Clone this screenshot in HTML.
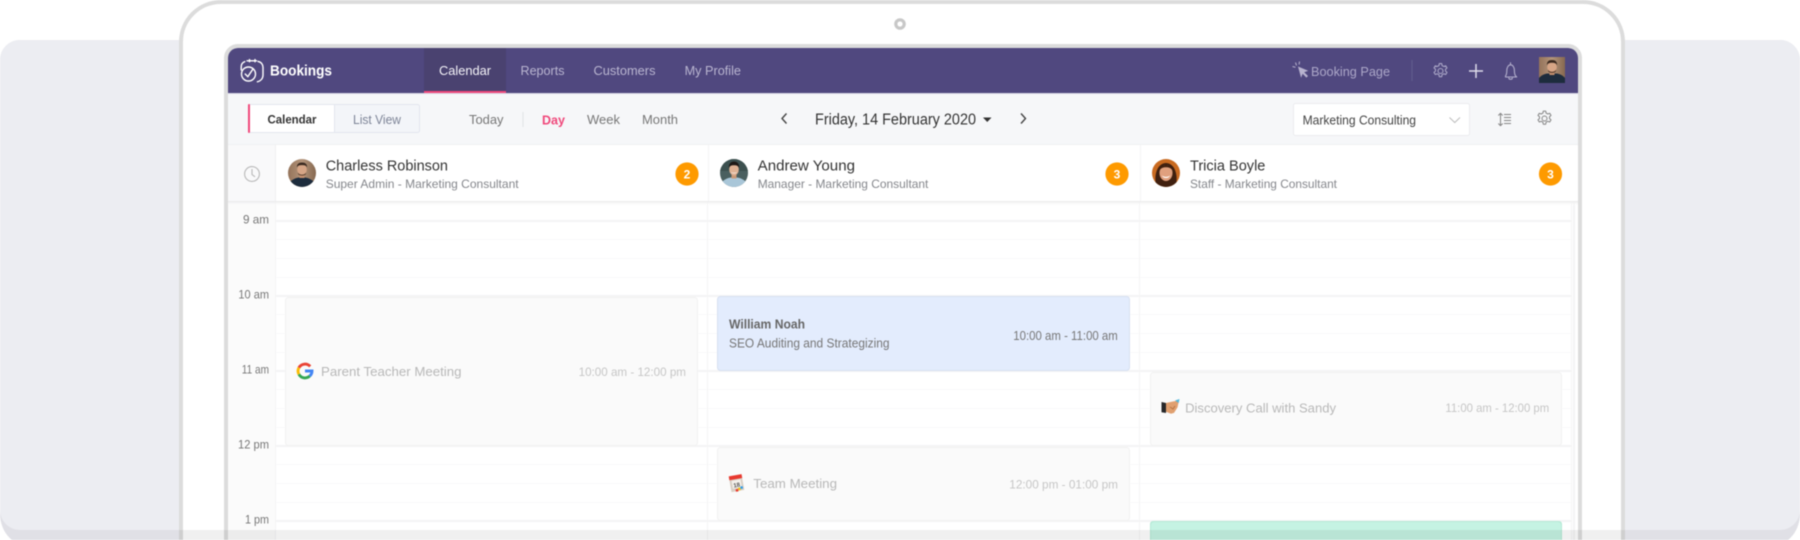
<!DOCTYPE html>
<html lang="en">
<head>
<meta charset="utf-8">
<title>Bookings</title>
<style>
html,body{margin:0;padding:0;background:#fff;width:1800px;height:540px;overflow:hidden}
svg{display:block;filter:blur(.4px)}
text{font-family:"Liberation Sans",Arial,sans-serif}
.n{font-size:13px;fill:#b9b5d0}
.tb{font-size:13px;fill:#777}
.nm{font-size:15px;fill:#333}
.sb{font-size:12px;fill:#85878c}
.tm{font-size:12px;fill:#777}
.ev{font-size:13px;fill:#b8b8b8}
.et{font-size:12px;fill:#c6c6c6}
.bd{font-size:12px;font-weight:bold;fill:#fff}
</style>
</head>
<body>
<svg xmlns="http://www.w3.org/2000/svg" width="1800" height="540" viewBox="0 0 1800 540">
<defs>
<clipPath id="c1"><circle cx="302" cy="173" r="14"/></clipPath>
<clipPath id="c2"><circle cx="734" cy="173" r="14"/></clipPath>
<clipPath id="c3"><circle cx="1166" cy="173" r="14"/></clipPath>
<clipPath id="navclip"><path d="M228 540V58a10 10 0 0 1 10-10H1568a10 10 0 0 1 10 10V540z"/></clipPath>
<linearGradient id="sh" x1="0" y1="0" x2="0" y2="1"><stop offset="0" stop-color="#e9e9ea"/><stop offset="1" stop-color="#fff" stop-opacity="0"/></linearGradient>
<linearGradient id="wood" x1="0" y1="0" x2="1" y2="0"><stop offset="0" stop-color="#94735a"/><stop offset=".5" stop-color="#b3947a"/><stop offset="1" stop-color="#866850"/></linearGradient>
</defs>

<!-- background panels -->
<path d="M0 540V60a20 20 0 0 1 20-20H1780a20 20 0 0 1 20 20V517Q1798 532 1788 540H12Q2 532 0 517z" fill="#e0e0e6" transform="translate(0 0)"/>
<rect x="0" y="40" width="1800" height="490" rx="20" fill="#ecedf2"/>

<!-- laptop -->
<path d="M181 540V42a40 40 0 0 1 40-40H1583a40 40 0 0 1 40 40V540" fill="#fff" stroke="#dcdcdc" stroke-width="4"/>
<circle cx="900" cy="24" r="4.200" fill="#fff" stroke="#c8c8c8" stroke-width="3.200"/>
<path d="M226 540V58a12 12 0 0 1 12-12H1568a12 12 0 0 1 12 12V540" fill="#fff" stroke="#dcdcdc" stroke-width="4"/>

<g clip-path="url(#navclip)">
<!-- nav -->
<rect x="228" y="48" width="1350" height="45" fill="#50487f"/>
<rect x="424" y="48" width="82" height="45" fill="#4a4270"/>
<rect x="424" y="91" width="82" height="2" fill="#f0487b"/>
<rect x="228" y="93" width="1350" height="1" fill="#d9d8e6"/>
<!-- toolbar -->
<rect x="228" y="94" width="1350" height="51" fill="#f6f7f9"/>
<rect x="228" y="144" width="1350" height="1" fill="#f0f1f3"/>

<!-- grid -->
<rect x="228" y="145" width="48" height="395" fill="#fbfbfb"/>
<rect x="276" y="145" width="1302" height="395" fill="#fff"/>
<g fill="#f9f9fa">
<rect x="276" y="239" width="1295" height="1"/><rect x="276" y="258" width="1295" height="1"/><rect x="276" y="277" width="1295" height="1"/>
<rect x="276" y="314" width="1295" height="1"/><rect x="276" y="333" width="1295" height="1"/><rect x="276" y="352" width="1295" height="1"/>
<rect x="276" y="389" width="1295" height="1"/><rect x="276" y="408" width="1295" height="1"/><rect x="276" y="427" width="1295" height="1"/>
<rect x="276" y="464" width="1295" height="1"/><rect x="276" y="483" width="1295" height="1"/><rect x="276" y="502" width="1295" height="1"/>
</g>
<g fill="#f4f4f5">
<rect x="276" y="220" width="1295" height="2"/><rect x="276" y="295" width="1295" height="2"/><rect x="276" y="370" width="1295" height="2"/><rect x="276" y="445" width="1295" height="2"/><rect x="276" y="520" width="1295" height="2"/>
<rect x="275" y="201" width="1" height="339"/><rect x="707" y="201" width="1" height="339"/><rect x="1139" y="201" width="1" height="339"/><rect x="1571" y="201" width="1" height="339"/><rect x="1573" y="201" width="2" height="339"/>
</g>
<!-- header -->
<rect x="228" y="145" width="48" height="56" fill="#f9f9fa"/>
<rect x="276" y="145" width="1302" height="56" fill="#fff"/>
<rect x="275" y="145" width="1" height="56" fill="#f0f0f1"/>
<rect x="708" y="145" width="1" height="56" fill="#f4f4f5"/>
<rect x="1140" y="145" width="1" height="56" fill="#f4f4f5"/>
<rect x="228" y="201" width="1350" height="5" fill="url(#sh)"/>

<!-- events -->
<rect x="285.500" y="297.500" width="412" height="148" rx="3" fill="#fafafa" stroke="#f2f2f2"/>
<rect x="717.500" y="296.500" width="412" height="74" rx="3" fill="#e3ecfd" stroke="#d7e0f1"/>
<rect x="717.500" y="447.500" width="412" height="73" rx="3" fill="#fafafa" stroke="#f2f2f2"/>
<rect x="1150.500" y="372.500" width="411" height="73" rx="3" fill="#fafafa" stroke="#f2f2f2"/>
<path d="M1150 540V524a3 3 0 0 1 3-3H1559a3 3 0 0 1 3 3V540z" fill="#b6e9d6"/>
<path d="M1151 540V525a3 3 0 0 1 3-3H1558a3 3 0 0 1 3 3V540z" fill="#c5f3e3"/>
</g>

<!-- logo -->
<g transform="translate(240 59)" fill="none" stroke="#fff" stroke-width="1.400" stroke-linecap="round" stroke-linejoin="round">
<circle cx="8.500" cy="15" r="7"/>
<path d="M5.200 15l2.600 2.700L13 10"/>
<path d="M7 1.800H16.500M9.500 .6v2.200M15 .6v2.200"/>
<path d="M18 2.400c3 .4 5 3 5 6v7.600c0 3.600-2.400 6-5.600 6.800"/>
<path d="M1.200 11V8c0-2.600 1.400-4.600 3.600-5.400"/>
</g>

<text x="270" y="75.500" font-size="15" font-weight="bold" fill="#fff" textLength="62" lengthAdjust="spacingAndGlyphs">Bookings</text>
<text x="439" y="75" class="n" style="fill:#f4f3f8" textLength="52" lengthAdjust="spacingAndGlyphs">Calendar</text>
<text x="520.500" y="75" class="n" textLength="44" lengthAdjust="spacingAndGlyphs">Reports</text>
<text x="593.500" y="75" class="n" textLength="62" lengthAdjust="spacingAndGlyphs">Customers</text>
<text x="684.600" y="75" class="n" textLength="56.400" lengthAdjust="spacingAndGlyphs">My Profile</text>

<!-- right nav -->
<g fill="#b8b3cf">
<path d="M1298 66.500l10.200 4.200-4 1.500 3.800 3.800-1.600 1.600-3.800-3.800-1.500 4z"/>
<path d="M1295.500 62.500l1 3M1292.500 66.500l3 .8M1299.500 61.500l-.4 3" stroke="#b8b3cf" stroke-width="1" fill="none"/>
</g>
<text x="1311" y="76" class="n" style="fill:#aca7c8" textLength="79" lengthAdjust="spacingAndGlyphs">Booking Page</text>
<rect x="1411.500" y="60" width="1" height="21" fill="#635c8e"/>
<g fill="none" stroke="#a9a5c6" stroke-width="1.100" stroke-linejoin="round">
<path transform="translate(1432.500 63)" d="M6.800 .6h2.400l.4 2 1.700.9 1.900-.7 1.300 2.100-1.500 1.400v1.700l1.500 1.400-1.300 2.100-1.900-.7-1.700.9-.4 2H6.800l-.4-2-1.700-.9-1.900.7-1.300-2.100 1.500-1.400V6.300L1.500 4.900l1.300-2.100 1.900.7 1.700-.9z"/>
<circle cx="1440.500" cy="71" r="2.500"/>
</g>
<path d="M1476 64v14M1469 71h14" stroke="#dedcea" stroke-width="1.500" fill="none"/>
<g fill="none" stroke="#b3afcd" stroke-width="1.100" stroke-linejoin="round" stroke-linecap="round">
<path d="M1510.500 62.800v1.200M1505.500 76c1.200-1.400 1.300-3 1.300-5.400 0-3.200 1.600-5.800 3.800-5.800s3.800 2.600 3.800 5.800c0 2.400.1 4 1.300 5.400l1 1h-11.200z"/>
<path d="M1508.800 78.200c.4 1.400 3.200 1.400 3.600 0"/>
</g>
<!-- nav avatar -->
<g>
<rect x="1539" y="57" width="26" height="26" fill="url(#wood)"/>
<path d="M1539 83v-5c2-2.500 5-4 8-4.500h10c3 .5 6 2 8 4.500v5z" fill="#1d2c3d"/>
<rect x="1549.500" y="71" width="5" height="4" fill="#c4906f"/>
<ellipse cx="1552" cy="67" rx="4.800" ry="5.800" fill="#d6a586"/>
<path d="M1547 65.500c-.5-4 2-5.500 5-5.500s5.500 1.500 5 5.500c-.6-2-2-2.700-5-2.700s-4.400.7-5 2.700z" fill="#3a2a20"/>
<path d="M1548 69.500c1 3 7 3 8 0l-.2 2c-1.500 2-6 2-7.600 0z" fill="#5a4030"/>
</g>

<!-- toolbar content -->
<rect x="248.500" y="104.500" width="171" height="28" rx="2" fill="#f3f5f9" stroke="#e3e6ee"/>
<rect x="249" y="105" width="85" height="27" fill="#fff"/>
<rect x="334" y="105" width="1" height="27" fill="#e3e6ee"/>
<rect x="248" y="104" width="2" height="29" rx="1" fill="#f0487b"/>
<text x="267.500" y="123.500" font-size="12" font-weight="bold" fill="#333" textLength="49" lengthAdjust="spacingAndGlyphs">Calendar</text>
<text x="353" y="124" font-size="12.500" fill="#7d8497" textLength="48" lengthAdjust="spacingAndGlyphs">List View</text>
<text x="469" y="124" class="tb" textLength="34.500" lengthAdjust="spacingAndGlyphs">Today</text>
<rect x="522.500" y="112" width="1" height="15" fill="#e2e3e6"/>
<text x="542" y="124.500" font-size="13" font-weight="bold" fill="#f0487b" textLength="23" lengthAdjust="spacingAndGlyphs">Day</text>
<text x="587" y="124" class="tb" textLength="33" lengthAdjust="spacingAndGlyphs">Week</text>
<text x="642" y="124" class="tb" textLength="36" lengthAdjust="spacingAndGlyphs">Month</text>
<path d="M786.500 113.500L782 118.500l4.500 5M1021 113.500l4.500 5-4.500 5" fill="none" stroke="#444" stroke-width="1.400"/>
<text x="815" y="124.500" font-size="15.500" fill="#333" textLength="161" lengthAdjust="spacingAndGlyphs">Friday, 14 February 2020</text>
<path d="M983 117.500h8.500l-4.250 4.500z" fill="#333"/>

<rect x="1293.500" y="103.500" width="176" height="32" rx="2" fill="#fff" stroke="#ebecef"/>
<text x="1302.600" y="124.500" font-size="12.500" fill="#444" textLength="113.400" lengthAdjust="spacingAndGlyphs">Marketing Consulting</text>
<path d="M1449.500 117.500l5.250 5 5.250-5" fill="none" stroke="#bdbdbd" stroke-width="1"/>
<g fill="none" stroke="#858585" stroke-width="1">
<path d="M1500.500 113.500v12M1498.300 115.500l2.200-2.200 2.200 2.200M1498.300 123.500l2.200 2.200 2.200-2.200"/>
<path d="M1504 114.500h7M1504 117.500h7M1504 120.500h7M1504 123.500h7"/>
<path transform="translate(1536.500 110.500)" d="M6.800 .6h2.400l.4 2 1.700.9 1.900-.7 1.300 2.100-1.500 1.400v1.700l1.500 1.400-1.300 2.100-1.900-.7-1.700.9-.4 2H6.800l-.4-2-1.700-.9-1.900.7-1.300-2.100 1.500-1.400V6.300L1.500 4.900l1.300-2.100 1.900.7 1.700-.9z" stroke-linejoin="round"/>
<circle cx="1544.500" cy="118.500" r="2.500"/>
</g>

<!-- header content -->
<g fill="none" stroke="#b8b8b8" stroke-width="1.100">
<circle cx="252" cy="174" r="7.400"/><path d="M252 169v5.500l3 2.300"/>
</g>

<g clip-path="url(#c1)">
<rect x="288" y="159" width="28" height="28" fill="url(#wood)"/>
<path d="M288 187v-3c3-4 7-6 11-6.500h6c4 .5 8 2.500 11 6.500v3z" fill="#1d2c3d"/>
<rect x="299.500" y="173" width="5" height="5" fill="#c4906f"/>
<ellipse cx="302" cy="169.500" rx="4.800" ry="5.800" fill="#d6a586"/>
<path d="M297 167.500c-.5-3.500 2-5 5-5s5.500 1.500 5 5c-.6-1.800-2-2.400-5-2.400s-4.400.6-5 2.400z" fill="#3a2a20"/>
<path d="M298 172.500c1 2.800 7 2.800 8 0l-.2 1.800c-1.500 1.800-6 1.800-7.600 0z" fill="#5a4030"/>
</g>
<g clip-path="url(#c2)">
<rect x="720" y="159" width="28" height="28" fill="#4a5f5f"/>
<path d="M720 159h28v12h-28z" fill="#3c504f"/>
<path d="M720 187v-3c3-4 7-6 11-6.500h6c4 .5 8 2.500 11 6.500v3z" fill="#a9c6d8"/>
<rect x="731.500" y="173" width="5" height="5.500" fill="#c99877"/>
<ellipse cx="734" cy="169.500" rx="4.800" ry="5.900" fill="#dfb294"/>
<path d="M729 168c-.6-4.500 2.200-6.500 5-6.500s5.800 2 5 6.500c-.6-2-2-2.800-5-2.800s-4.400.8-5 2.800z" fill="#1f1a17"/>
<path d="M731 172c1.500 1 4.500 1 6 0-.5 1.800-5.500 1.800-6 0z" fill="#fff"/>
</g>
<g clip-path="url(#c3)">
<rect x="1152" y="159" width="28" height="28" fill="#c96a20"/>
<path d="M1156 187c-1-7-1-12 1-17s6-7 9-7 7 2 9 7 2 10 1 17z" fill="#40200f"/>
<ellipse cx="1166" cy="173" rx="6.500" ry="8" fill="#e0a07e"/>
<path d="M1159.500 170c1-4 4.500-5 6.500-5s5.500 1 6.500 5c-2-2-3.500-2.800-6.500-2.800s-4.500.8-6.500 2.800z" fill="#40200f"/>
<path d="M1162 175.500c2.200 1.800 5.800 1.800 8 0-1 3.400-7 3.400-8 0z" fill="#fff"/>
</g>

<text x="325.700" y="170.500" class="nm" textLength="122.300" lengthAdjust="spacingAndGlyphs">Charless Robinson</text>
<text x="325.700" y="188" class="sb" textLength="192.900" lengthAdjust="spacingAndGlyphs">Super Admin - Marketing Consultant</text>
<text x="757.700" y="170.500" class="nm" textLength="97.300" lengthAdjust="spacingAndGlyphs">Andrew Young</text>
<text x="757.700" y="188" class="sb" textLength="170.700" lengthAdjust="spacingAndGlyphs">Manager - Marketing Consultant</text>
<text x="1190" y="170.500" class="nm" textLength="75.400" lengthAdjust="spacingAndGlyphs">Tricia Boyle</text>
<text x="1190" y="188" class="sb" textLength="147" lengthAdjust="spacingAndGlyphs">Staff - Marketing Consultant</text>

<circle cx="687" cy="174" r="11.600" fill="#fe9a00"/>
<text x="687" y="178.300" class="bd" text-anchor="middle">2</text>
<circle cx="1117" cy="174" r="11.600" fill="#fe9a00"/>
<text x="1117" y="178.300" class="bd" text-anchor="middle">3</text>
<circle cx="1550.500" cy="174" r="11.600" fill="#fe9a00"/>
<text x="1550.500" y="178.300" class="bd" text-anchor="middle">3</text>

<!-- time labels -->
<text x="243" y="223.500" class="tm" textLength="26" lengthAdjust="spacingAndGlyphs">9 am</text>
<text x="238.400" y="298.500" class="tm" textLength="30.600" lengthAdjust="spacingAndGlyphs">10 am</text>
<text x="241.800" y="373.500" class="tm" textLength="27.200" lengthAdjust="spacingAndGlyphs">11 am</text>
<text x="238" y="448.500" class="tm" textLength="31" lengthAdjust="spacingAndGlyphs">12 pm</text>
<text x="245" y="523.500" class="tm" textLength="24" lengthAdjust="spacingAndGlyphs">1 pm</text>

<!-- google G -->
<g fill="none" stroke-width="2.900" transform="translate(305 371)">
<path d="M5.200 -4.600A7 7 0 0 0 -6.100 -3.300" stroke="#ea4335"/>
<path d="M-6.100 -3.300A7 7 0 0 0 -6.100 3.300" stroke="#fbbc05"/>
<path d="M-6.100 3.300A7 7 0 0 0 4.700 5.100" stroke="#34a853"/>
<path d="M4.700 5.100A7 7 0 0 0 7 0H0" stroke="#4285f4"/>
</g>
<text x="321" y="376" class="ev" textLength="140.500" lengthAdjust="spacingAndGlyphs">Parent Teacher Meeting</text>
<text x="578.600" y="376" class="et" textLength="107.400" lengthAdjust="spacingAndGlyphs">10:00 am - 12:00 pm</text>

<text x="729" y="328.700" font-size="13" font-weight="bold" fill="#666" textLength="76" lengthAdjust="spacingAndGlyphs">William Noah</text>
<text x="729" y="347.700" font-size="12.500" fill="#777" textLength="160.500" lengthAdjust="spacingAndGlyphs">SEO Auditing and Strategizing</text>
<text x="1013.300" y="340" font-size="12.500" fill="#777" textLength="104.500" lengthAdjust="spacingAndGlyphs">10:00 am - 11:00 am</text>

<!-- calendar icon -->
<g transform="rotate(-10 737 483)">
<rect x="730" y="476" width="13" height="15" fill="#d9cfc4"/>
<rect x="730" y="475" width="13" height="4" fill="#e8392f"/>
<rect x="732" y="480" width="9" height="8" fill="#f4f1ec"/>
<text x="733" y="487" font-size="6" font-weight="bold" fill="#555">18</text>
<rect x="737" y="488" width="2.500" height="2.500" fill="#f5c518"/><rect x="739.500" y="487" width="2.500" height="2.500" fill="#2f9be8"/><rect x="734.500" y="489" width="2.500" height="2.500" fill="#e8392f"/>
</g>
<text x="753.300" y="488" class="ev" textLength="83.700" lengthAdjust="spacingAndGlyphs">Team Meeting</text>
<text x="1009.300" y="488.700" class="et" textLength="108.700" lengthAdjust="spacingAndGlyphs">12:00 pm - 01:00 pm</text>

<!-- handshake icon -->
<g>
<path d="M1161.500 402l4.500 1v10l-4.500-.8z" fill="#27282a"/>
<path d="M1166 403l4.500-1 3-.6 5.500-1-1.500 7-3.500 5.500-3 .8-5-2z" fill="#e0a070"/>
<path d="M1170 407l3 2 2-3" fill="none" stroke="#b87544" stroke-width="1"/>
<path d="M1175 400.500l4.500-1.500-.8 4z" fill="#54b8dc"/>
</g>
<text x="1185.100" y="412.700" class="ev" textLength="150.900" lengthAdjust="spacingAndGlyphs">Discovery Call with Sandy</text>
<text x="1445.400" y="412" class="et" textLength="103.800" lengthAdjust="spacingAndGlyphs">11:00 am - 12:00 pm</text>

<!-- bottom strip -->
<rect x="179" y="530" width="1446" height="10" fill="#000" opacity=".06"/>
</svg>
</body>
</html>
